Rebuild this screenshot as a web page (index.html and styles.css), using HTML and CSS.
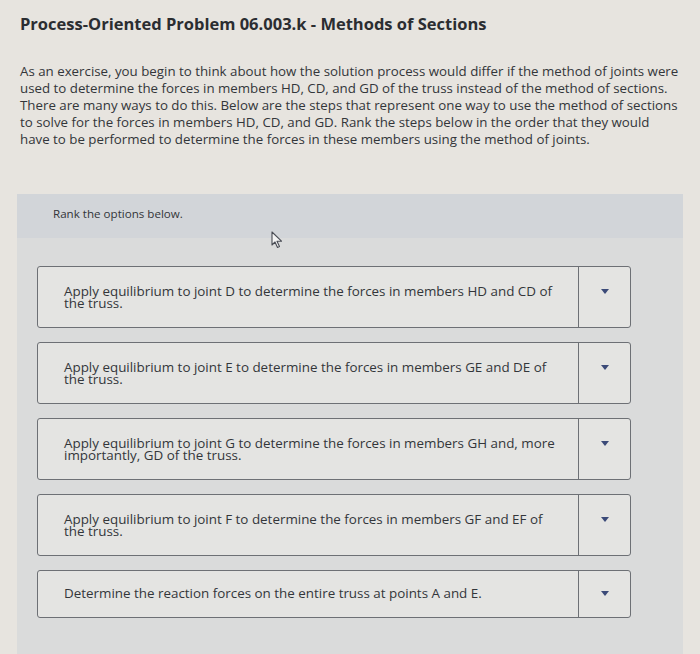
FILE: index.html
```html
<!DOCTYPE html>
<html lang="en">
<head>
    <meta charset="UTF-8">
    <title>Process-Oriented Problem 06.003.k</title>
    <link rel="stylesheet" href="styles.css">
</head>
<body>
    <h1 class="title">Process-Oriented Problem 06.003.k - Methods of Sections</h1>

    <p class="prompt">As an exercise, you begin to think about how the solution process would differ if the method of joints were used to determine the forces in members HD, CD, and GD of the truss instead of the method of sections. There are many ways to do this. Below are the steps that represent one way to use the method of sections to solve for the forces in members HD, CD, and GD. Rank the steps below in the order that they would have to be performed to determine the forces in these members using the method of joints.</p>

    <div class="rank-panel">
        <div class="rank-head">Rank the options below.</div>
        <!-- mouse pointer caught in the screenshot -->
        <svg class="pointer" width="13" height="18" viewBox="0 0 13 18">
            <path d="M1 1 L1 14 L4 11 L6.5 16.5 L8.5 15.6 L6 10.2 L10.5 10.2 Z" fill="#f4f4f4" stroke="#4a4d55" stroke-width="1.1" stroke-linejoin="round"/>
        </svg>
        <div class="rank-list">
            <div class="rank-item">
                <div class="rank-text">Apply equilibrium to joint D to determine the forces in members HD and CD of the truss.</div>
                <div class="rank-select"><span class="caret"></span></div>
            </div>
            <div class="rank-item">
                <div class="rank-text">Apply equilibrium to joint E to determine the forces in members GE and DE of the truss.</div>
                <div class="rank-select"><span class="caret"></span></div>
            </div>
            <div class="rank-item">
                <div class="rank-text">Apply equilibrium to joint G to determine the forces in members GH and, more importantly, GD of the truss.</div>
                <div class="rank-select"><span class="caret"></span></div>
            </div>
            <div class="rank-item">
                <div class="rank-text">Apply equilibrium to joint F to determine the forces in members GF and EF of the truss.</div>
                <div class="rank-select"><span class="caret"></span></div>
            </div>
            <div class="rank-item short">
                <div class="rank-text">Determine the reaction forces on the entire truss at points A and E.</div>
                <div class="rank-select"><span class="caret"></span></div>
            </div>
        </div>
    </div>
</body>
</html>
```

FILE: styles.css
```css
body {
    margin: 0;
    background: #e7e4df;
    color: #33363a;
    font-family: "Open Sans", "Liberation Sans", sans-serif;
}

.title {
    margin: 0;
    padding: 12px 20px 0;
    font-size: 16.5px;
    font-weight: bold;
    color: #2b2d31;
}

.prompt {
    margin: 28px 0 0;
    padding: 0 18px 0 20px;
    font-size: 13.3px;
    line-height: 17px;
}

.rank-panel {
    position: relative;
    margin: 46px 17px 0;
    background: #dadbdb;
    padding-bottom: 40px;
}

.rank-head {
    background: #d2d5d9;
    height: 44px;
    padding: 12px 0 0 36px;
    box-sizing: border-box;
    font-size: 11.6px;
}

.pointer {
    position: absolute;
    left: 254px;
    top: 37px;
}

.rank-list {
    padding: 28px 52px 0 20px;
    display: flex;
    flex-direction: column;
    gap: 14px;
}

.rank-item {
    display: flex;
    height: 60px;
    background: #e4e4e2;
    border: 1px solid #6d7075;
    border-radius: 3px;
}

.rank-item.short {
    height: 46px;
}

.rank-text {
    flex: 1;
    padding: 18px 18px 0 26px;
    font-size: 13.4px;
    line-height: 12px;
}

.rank-item.short .rank-text {
    padding-top: 16px;
}

.rank-select {
    width: 52px;
    border-left: 1px solid #6d7075;
    display: flex;
    justify-content: center;
    padding-top: 22px;
    box-sizing: border-box;
}

.rank-item.short .rank-select {
    padding-top: 20px;
}

.caret {
    width: 0;
    height: 0;
    border-left: 4px solid transparent;
    border-right: 4px solid transparent;
    border-top: 5px solid #3b4a78;
}
```
